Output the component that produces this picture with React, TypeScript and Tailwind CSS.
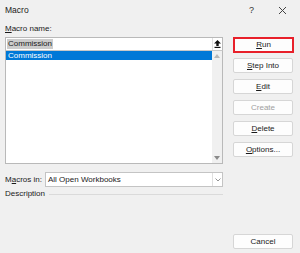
import React from "react";

function Btn({
	children,
	disabled,
	active,
}: {
	children: React.ReactNode;
	disabled?: boolean;
	active?: boolean;
}) {
	if (active) {
		return (
			<div className="h-[16px] w-[61px] border-2 border-[#e8202a] bg-[#fdfdfd] flex items-center justify-center text-[#1a1a1a]">
				{children}
			</div>
		);
	}
	return (
		<div
			className={`h-[15px] w-[60px] border border-[#d6d6d6] rounded-[2px] bg-[#fdfdfd] flex items-center justify-center ${
				disabled ? "text-[#a0a0a0]" : "text-[#1a1a1a]"
			}`}
		>
			{children}
		</div>
	);
}

export default function App() {
	return (
		<div
			className="w-[300px] h-[253px] bg-[#f0f0f0] flex flex-col text-[8px] text-[#1a1a1a] leading-none overflow-hidden whitespace-nowrap"
			style={{ fontFamily: '"Segoe UI", "Liberation Sans", sans-serif' }}
		>
			{/* title bar */}
			<div className="h-[20px] flex items-center pl-[5px] pr-[13px]">
				<span className="text-[8.5px]">Macro</span>
				<span className="ml-auto text-[9px] text-[#333]">?</span>
				<svg width="9" height="9" viewBox="0 0 9 9" className="ml-[24px]">
					<path d="M1 1 L8 8 M8 1 L1 8" stroke="#444" strokeWidth="1" />
				</svg>
			</div>

			<div className="flex flex-1 pl-[5px] pb-[4px]">
				{/* left column */}
				<div className="w-[218px] flex flex-col">
					<div className="h-[17px] flex items-center">
						<span>
							<span className="underline">M</span>acro name:
						</span>
					</div>
					<div className="h-[13px] bg-white border border-[#b9b9b9] border-b-0 flex items-center pl-[1px]">
						<span className="bg-[#cccccc] px-[1px] h-[10px] flex items-center">Commission</span>
						<div className="ml-auto w-[10px] h-full flex items-center justify-center border-l border-[#e0e0e0]">
							<svg width="7" height="8" viewBox="0 0 7 8">
								<path d="M3.5 0 L7 3.5 L4.7 3.5 L4.7 6 L2.3 6 L2.3 3.5 L0 3.5 Z" fill="#111" />
								<rect x="0.5" y="6.8" width="6" height="1.2" fill="#111" />
							</svg>
						</div>
					</div>
					<div className="h-[114px] bg-white border border-[#b9b9b9] border-t-[#c8c8c8] flex">
						<div className="flex-1">
							<div className="h-[9px] bg-[#0078d7] text-white flex items-center pl-[2px]">
								Commission
							</div>
						</div>
						<div className="w-[10px] bg-[#f0f0f0] flex flex-col items-center justify-between py-[3px]">
							<svg width="6" height="4" viewBox="0 0 6 4">
								<path d="M3 0 L6 4 L0 4 Z" fill="#b8b8b8" />
							</svg>
							<svg width="6" height="4" viewBox="0 0 6 4">
								<path d="M0 0 L6 0 L3 4 Z" fill="#8a8a8a" />
							</svg>
						</div>
					</div>

					<div className="mt-[8px] flex items-center">
						<span className="w-[40px]">
							M<span className="underline">a</span>cros in:
						</span>
						<div className="flex-1 h-[15px] bg-white border border-[#c4c4c4] flex items-center pl-[2px]">
							All Open Workbooks
							<div className="ml-auto w-[10px] h-full border-l border-[#e0e0e0] flex items-center justify-center">
								<svg width="6" height="4" viewBox="0 0 6 4">
									<path d="M0.5 0.5 L3 3 L5.5 0.5" stroke="#888" fill="none" strokeWidth="0.9" />
								</svg>
							</div>
						</div>
					</div>
					<div className="mt-[3px] flex items-center">
						<span>Description</span>
						<div className="flex-1 ml-[4px] h-px bg-[#dadada]" />
					</div>
				</div>

				{/* right column */}
				<div className="ml-[10px] w-[61px] flex flex-col pt-[17px]">
					<Btn active>
						<span className="underline">R</span>un
					</Btn>
					<div className="mt-[5px] flex flex-col gap-[6px]">
						<Btn>
							<span className="underline">S</span>tep Into
						</Btn>
						<Btn>
							<span className="underline">E</span>dit
						</Btn>
						<Btn disabled>Create</Btn>
						<Btn>
							<span className="underline">D</span>elete
						</Btn>
						<Btn>
							<span className="underline">O</span>ptions...
						</Btn>
					</div>
					<div className="mt-auto">
						<Btn>Cancel</Btn>
					</div>
				</div>
			</div>
		</div>
	);
}
